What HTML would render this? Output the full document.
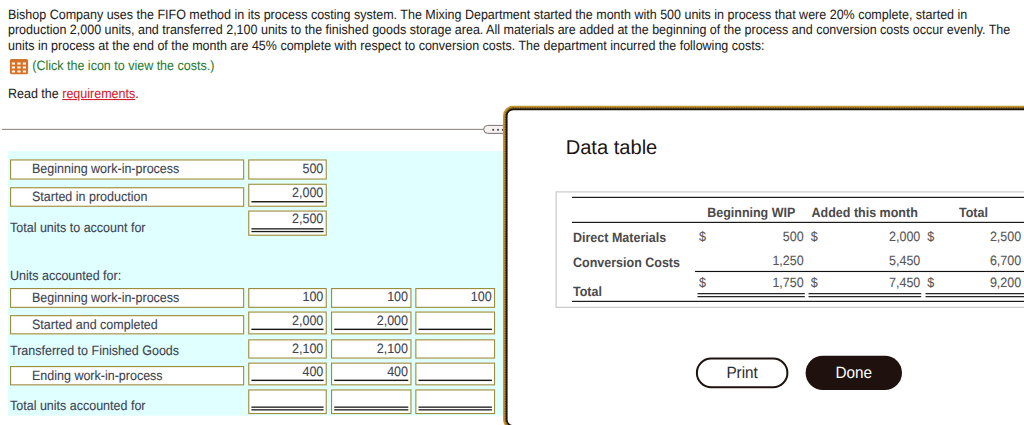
<!DOCTYPE html>
<html>
<head>
<meta charset="utf-8">
<title>Data table</title>
<style>
html,body{margin:0;padding:0;background:#fff;}
body{width:1024px;height:425px;position:relative;overflow:hidden;font-family:"Liberation Sans",sans-serif;font-size:12.5px;color:#1a1a1a;}
.abs{position:absolute;}
#g{position:absolute;left:0;top:0;}
.p,.t,.m,.x{position:absolute;white-space:nowrap;line-height:15px;height:15px;transform-origin:0 11.83px;transform:scaleY(1.08);-webkit-text-stroke:0.1px currentColor;text-rendering:geometricPrecision;}
.p{left:8px;color:#1c1c20;-webkit-text-stroke:0.05px currentColor;}
.t,.x{color:#3d4351;}
.t{left:10px;}
.x{text-align:right;}
.m{color:#555;-webkit-text-stroke:0.1px currentColor;}
.b{font-weight:bold;color:#4a4a4a;-webkit-text-stroke:0;}
.r{text-align:right;}
.btn{position:absolute;font-size:15.3px;text-align:center;white-space:nowrap;transform:scaleY(1.07);text-rendering:geometricPrecision;}
</style>
</head>
<body>
<svg id="g" width="1024" height="425" viewBox="0 0 1024 425">
<rect x="2" y="128.85" width="482" height="1.05" fill="#8c8380"/>
<rect x="483.7" y="125.4" width="28" height="8" rx="4" fill="#f5f1f0" stroke="#7d7371" stroke-width="1"/>
<rect x="492.30" y="128.9" width="1.8" height="1.8" fill="#444"/>
<rect x="497.10" y="128.9" width="1.8" height="1.8" fill="#444"/>
<rect x="501.90" y="128.9" width="1.8" height="1.8" fill="#444"/>
<rect x="8" y="151" width="500" height="264.6" fill="#e0ffff"/>
<g transform="translate(9.9 59.0)"><rect x="0" y="0" width="18.2" height="15.2" rx="1.6" fill="#d4722a"/><g fill="#fff3e0">
<rect x="1.9" y="3.5" width="3.2" height="2.1"/>
<rect x="7.4" y="3.5" width="3.3" height="2.1"/>
<rect x="12.9" y="3.5" width="3.2" height="2.1"/>
<rect x="1.9" y="7.4" width="3.2" height="2.1"/>
<rect x="7.4" y="7.4" width="3.3" height="2.1"/>
<rect x="12.9" y="7.4" width="3.2" height="2.1"/>
<rect x="1.9" y="11.5" width="3.2" height="2.0"/>
<rect x="7.4" y="11.5" width="3.3" height="2.0"/>
<rect x="12.9" y="11.5" width="3.2" height="2.0"/>
</g></g>
<rect x="10.00" y="159.40" width="234.20" height="20.20" fill="#fffdf2"/>
<rect x="11.80" y="161.20" width="230.60" height="16.60" fill="#fff"/>
<rect x="10.55" y="159.95" width="233.10" height="19.10" fill="none" stroke="#9c8c40" stroke-width="1.1"/>
<rect x="10.00" y="187.20" width="234.20" height="19.60" fill="#fffdf2"/>
<rect x="11.80" y="189.00" width="230.60" height="16.00" fill="#fff"/>
<rect x="10.55" y="187.75" width="233.10" height="18.50" fill="none" stroke="#9c8c40" stroke-width="1.1"/>
<rect x="248.20" y="159.40" width="78.60" height="20.20" fill="#fffdf2"/>
<rect x="250.00" y="161.20" width="75.00" height="16.60" fill="#fff"/>
<rect x="248.75" y="159.95" width="77.50" height="19.10" fill="none" stroke="#9c8c40" stroke-width="1.1"/>
<rect x="248.20" y="183.70" width="78.60" height="23.10" fill="#fffdf2"/>
<rect x="250.00" y="185.50" width="75.00" height="19.50" fill="#fff"/>
<rect x="248.75" y="184.25" width="77.50" height="22.00" fill="none" stroke="#9c8c40" stroke-width="1.1"/>
<rect x="251.40" y="201.05" width="72.20" height="1.4" fill="#151515"/>
<rect x="248.20" y="210.50" width="78.60" height="25.30" fill="#fffdf2"/>
<rect x="250.00" y="212.30" width="75.00" height="21.70" fill="#fff"/>
<rect x="248.75" y="211.05" width="77.50" height="24.20" fill="none" stroke="#9c8c40" stroke-width="1.1"/>
<rect x="251.40" y="228.20" width="72.20" height="1.3" fill="#1a1a1a"/>
<rect x="251.40" y="230.90" width="72.20" height="1.3" fill="#1a1a1a"/>
<rect x="10.00" y="288.00" width="234.20" height="19.90" fill="#fffdf2"/>
<rect x="11.80" y="289.80" width="230.60" height="16.30" fill="#fff"/>
<rect x="10.55" y="288.55" width="233.10" height="18.80" fill="none" stroke="#9c8c40" stroke-width="1.1"/>
<rect x="10.00" y="315.10" width="234.20" height="19.30" fill="#fffdf2"/>
<rect x="11.80" y="316.90" width="230.60" height="15.70" fill="#fff"/>
<rect x="10.55" y="315.65" width="233.10" height="18.20" fill="none" stroke="#9c8c40" stroke-width="1.1"/>
<rect x="10.00" y="366.00" width="234.20" height="19.40" fill="#fffdf2"/>
<rect x="11.80" y="367.80" width="230.60" height="15.80" fill="#fff"/>
<rect x="10.55" y="366.55" width="233.10" height="18.30" fill="none" stroke="#9c8c40" stroke-width="1.1"/>
<rect x="248.20" y="288.00" width="78.60" height="19.90" fill="#fffdf2"/>
<rect x="250.00" y="289.80" width="75.00" height="16.30" fill="#fff"/>
<rect x="248.75" y="288.55" width="77.50" height="18.80" fill="none" stroke="#9c8c40" stroke-width="1.1"/>
<rect x="331.00" y="288.00" width="80.50" height="19.90" fill="#fffdf2"/>
<rect x="332.80" y="289.80" width="76.90" height="16.30" fill="#fff"/>
<rect x="331.55" y="288.55" width="79.40" height="18.80" fill="none" stroke="#9c8c40" stroke-width="1.1"/>
<rect x="415.30" y="288.00" width="79.80" height="19.90" fill="#fffdf2"/>
<rect x="417.10" y="289.80" width="76.20" height="16.30" fill="#fff"/>
<rect x="415.85" y="288.55" width="78.70" height="18.80" fill="none" stroke="#9c8c40" stroke-width="1.1"/>
<rect x="248.20" y="311.50" width="78.60" height="22.90" fill="#fffdf2"/>
<rect x="250.00" y="313.30" width="75.00" height="19.30" fill="#fff"/>
<rect x="248.75" y="312.05" width="77.50" height="21.80" fill="none" stroke="#9c8c40" stroke-width="1.1"/>
<rect x="251.40" y="328.65" width="72.20" height="1.4" fill="#151515"/>
<rect x="331.00" y="311.50" width="80.50" height="22.90" fill="#fffdf2"/>
<rect x="332.80" y="313.30" width="76.90" height="19.30" fill="#fff"/>
<rect x="331.55" y="312.05" width="79.40" height="21.80" fill="none" stroke="#9c8c40" stroke-width="1.1"/>
<rect x="334.20" y="328.65" width="74.10" height="1.4" fill="#151515"/>
<rect x="415.30" y="311.50" width="79.80" height="22.90" fill="#fffdf2"/>
<rect x="417.10" y="313.30" width="76.20" height="19.30" fill="#fff"/>
<rect x="415.85" y="312.05" width="78.70" height="21.80" fill="none" stroke="#9c8c40" stroke-width="1.1"/>
<rect x="418.50" y="328.65" width="73.40" height="1.4" fill="#151515"/>
<rect x="248.20" y="339.30" width="78.60" height="19.30" fill="#fffdf2"/>
<rect x="250.00" y="341.10" width="75.00" height="15.70" fill="#fff"/>
<rect x="248.75" y="339.85" width="77.50" height="18.20" fill="none" stroke="#9c8c40" stroke-width="1.1"/>
<rect x="331.00" y="339.30" width="80.50" height="19.30" fill="#fffdf2"/>
<rect x="332.80" y="341.10" width="76.90" height="15.70" fill="#fff"/>
<rect x="331.55" y="339.85" width="79.40" height="18.20" fill="none" stroke="#9c8c40" stroke-width="1.1"/>
<rect x="415.30" y="339.30" width="79.80" height="19.30" fill="#fffdf2"/>
<rect x="417.10" y="341.10" width="76.20" height="15.70" fill="#fff"/>
<rect x="415.85" y="339.85" width="78.70" height="18.20" fill="none" stroke="#9c8c40" stroke-width="1.1"/>
<rect x="248.20" y="362.60" width="78.60" height="22.80" fill="#fffdf2"/>
<rect x="250.00" y="364.40" width="75.00" height="19.20" fill="#fff"/>
<rect x="248.75" y="363.15" width="77.50" height="21.70" fill="none" stroke="#9c8c40" stroke-width="1.1"/>
<rect x="251.40" y="379.65" width="72.20" height="1.4" fill="#151515"/>
<rect x="331.00" y="362.60" width="80.50" height="22.80" fill="#fffdf2"/>
<rect x="332.80" y="364.40" width="76.90" height="19.20" fill="#fff"/>
<rect x="331.55" y="363.15" width="79.40" height="21.70" fill="none" stroke="#9c8c40" stroke-width="1.1"/>
<rect x="334.20" y="379.65" width="74.10" height="1.4" fill="#151515"/>
<rect x="415.30" y="362.60" width="79.80" height="22.80" fill="#fffdf2"/>
<rect x="417.10" y="364.40" width="76.20" height="19.20" fill="#fff"/>
<rect x="415.85" y="363.15" width="78.70" height="21.70" fill="none" stroke="#9c8c40" stroke-width="1.1"/>
<rect x="418.50" y="379.65" width="73.40" height="1.4" fill="#151515"/>
<rect x="248.20" y="389.40" width="78.60" height="24.70" fill="#fffdf2"/>
<rect x="250.00" y="391.20" width="75.00" height="21.10" fill="#fff"/>
<rect x="248.75" y="389.95" width="77.50" height="23.60" fill="none" stroke="#9c8c40" stroke-width="1.1"/>
<rect x="251.40" y="406.50" width="72.20" height="1.3" fill="#1a1a1a"/>
<rect x="251.40" y="409.20" width="72.20" height="1.3" fill="#1a1a1a"/>
<rect x="331.00" y="389.40" width="80.50" height="24.70" fill="#fffdf2"/>
<rect x="332.80" y="391.20" width="76.90" height="21.10" fill="#fff"/>
<rect x="331.55" y="389.95" width="79.40" height="23.60" fill="none" stroke="#9c8c40" stroke-width="1.1"/>
<rect x="334.20" y="406.50" width="74.10" height="1.3" fill="#1a1a1a"/>
<rect x="334.20" y="409.20" width="74.10" height="1.3" fill="#1a1a1a"/>
<rect x="415.30" y="389.40" width="79.80" height="24.70" fill="#fffdf2"/>
<rect x="417.10" y="391.20" width="76.20" height="21.10" fill="#fff"/>
<rect x="415.85" y="389.95" width="78.70" height="23.60" fill="none" stroke="#9c8c40" stroke-width="1.1"/>
<rect x="418.50" y="406.50" width="73.40" height="1.3" fill="#1a1a1a"/>
<rect x="418.50" y="409.20" width="73.40" height="1.3" fill="#1a1a1a"/>
<rect x="503.20" y="105.80" width="560" height="323.7" rx="10" fill="#fff"/>
<rect x="504.45" y="107.05" width="560" height="321.20" rx="8.75" fill="none" stroke="#c4922a" stroke-width="2.80"/>
<rect x="505.30" y="107.90" width="560" height="319.50" rx="7.90" fill="none" stroke="#3a2808" stroke-width="1" stroke-dasharray="0.85 0.85"/>
<rect x="506.65" y="109.25" width="560" height="316.80" rx="6.55" fill="none" stroke="#1e1408" stroke-width="1.90"/>
<rect x="556.1" y="191.9" width="500" height="115.4" fill="none" stroke="#c9c9c9" stroke-width="1.2"/>
<rect x="572.0" y="196.8" width="460.0" height="1.15" fill="#111"/>
<rect x="572.0" y="221.8" width="460.0" height="1.15" fill="#111"/>
<rect x="695.0" y="270.9" width="340.0" height="1.15" fill="#111"/>
<rect x="572.0" y="300.8" width="460.0" height="1.15" fill="#111"/>
<rect x="697.5" y="293.1" width="107.3" height="1.15" fill="#111"/>
<rect x="697.5" y="296.1" width="107.3" height="1.15" fill="#111"/>
<rect x="808.5" y="293.1" width="112.7" height="1.15" fill="#111"/>
<rect x="808.5" y="296.1" width="112.7" height="1.15" fill="#111"/>
<rect x="925.5" y="293.1" width="110.0" height="1.15" fill="#111"/>
<rect x="925.5" y="296.1" width="110.0" height="1.15" fill="#111"/>
<rect x="696.9" y="358.6" width="90.5" height="28.6" rx="14.3" fill="#fff" stroke="#1f130f" stroke-width="2"/>
<rect x="805.6" y="355.7" width="96.4" height="34.4" rx="17.2" fill="#1f120e"/>
</svg>
<div class="p" style="top:8.00px">Bishop Company uses the FIFO method in its process costing system. The Mixing Department started the month with 500 units in process that were 20% complete, started in</div>
<div class="p" style="top:23.00px">production 2,000 units, and transferred 2,100 units to the finished goods storage area. All materials are added at the beginning of the process and conversion costs occur evenly. The</div>
<div class="p" style="top:39.00px">units in process at the end of the month are 45% complete with respect to conversion costs. The department incurred the following costs:</div>
<div class="p" style="top:59.00px;left:32.30px;color:#2a7a2e">(Click the icon to view the costs.)</div>
<div class="p" style="top:87.00px">Read the <span style="color:#d3202e;text-decoration:underline">requirements</span>.</div>
<div class="t" style="top:162.00px;left:32.00px">Beginning work-in-process</div>
<div class="t" style="top:190.00px;left:32.00px">Started in production</div>
<div class="t" style="top:221.00px;left:10.00px">Total units to account for</div>
<div class="x" style="top:162.00px;left:263.30px;width:60px">500</div>
<div class="x" style="top:185.80px;left:263.30px;width:60px">2,000</div>
<div class="x" style="top:212.30px;left:263.30px;width:60px">2,500</div>
<div class="t" style="top:269.00px;left:10.00px">Units accounted for:</div>
<div class="t" style="top:290.50px;left:32.00px">Beginning work-in-process</div>
<div class="t" style="top:318.00px;left:32.00px">Started and completed</div>
<div class="t" style="top:344.00px;left:10.00px">Transferred to Finished Goods</div>
<div class="t" style="top:369.00px;left:32.00px">Ending work-in-process</div>
<div class="t" style="top:398.50px;left:10.00px">Total units accounted for</div>
<div class="x" style="top:290.00px;left:263.30px;width:60px">100</div>
<div class="x" style="top:290.00px;left:348.00px;width:60px">100</div>
<div class="x" style="top:290.00px;left:431.60px;width:60px">100</div>
<div class="x" style="top:313.50px;left:263.30px;width:60px">2,000</div>
<div class="x" style="top:313.50px;left:348.00px;width:60px">2,000</div>
<div class="x" style="top:342.00px;left:263.30px;width:60px">2,100</div>
<div class="x" style="top:342.00px;left:348.00px;width:60px">2,100</div>
<div class="x" style="top:364.60px;left:263.30px;width:60px">400</div>
<div class="x" style="top:364.60px;left:348.00px;width:60px">400</div>
<div class="abs" style="left:565.7px;top:135.6px;font-size:20.1px;line-height:24px;color:#1c1414;text-rendering:geometricPrecision;white-space:nowrap">Data table</div>
<div class="m b" style="left:697.50px;top:205.50px;width:107.50px;text-align:center">Beginning WIP</div>
<div class="m b" style="left:808.20px;top:205.50px;width:113.00px;text-align:center">Added this month</div>
<div class="m b" style="left:925.50px;top:205.50px;width:96.00px;text-align:center">Total</div>
<div class="m b" style="left:573.00px;top:231.00px">Direct Materials</div>
<div class="m b" style="left:573.00px;top:256.00px">Conversion Costs</div>
<div class="m b" style="left:573.00px;top:284.60px">Total</div>
<div class="m " style="left:699.00px;top:230.00px">$</div>
<div class="m r" style="left:700.00px;top:230.00px;width:103.70px;text-align:right">500</div>
<div class="m " style="left:810.80px;top:230.00px">$</div>
<div class="m r" style="left:812.00px;top:230.00px;width:108.30px;text-align:right">2,000</div>
<div class="m " style="left:927.20px;top:230.00px">$</div>
<div class="m r" style="left:930.00px;top:230.00px;width:91.20px;text-align:right">2,500</div>
<div class="m r" style="left:700.00px;top:254.00px;width:103.70px;text-align:right">1,250</div>
<div class="m r" style="left:812.00px;top:254.00px;width:108.30px;text-align:right">5,450</div>
<div class="m r" style="left:930.00px;top:254.00px;width:91.20px;text-align:right">6,700</div>
<div class="m " style="left:699.00px;top:276.00px">$</div>
<div class="m r" style="left:700.00px;top:276.00px;width:103.70px;text-align:right">1,750</div>
<div class="m " style="left:810.80px;top:276.00px">$</div>
<div class="m r" style="left:812.00px;top:276.00px;width:108.30px;text-align:right">7,450</div>
<div class="m " style="left:927.20px;top:276.00px">$</div>
<div class="m r" style="left:930.00px;top:276.00px;width:91.20px;text-align:right">9,200</div>
<div class="btn" style="left:696px;top:358.6px;width:92.3px;height:30.6px;line-height:30.6px;transform-origin:50% 20.6px;color:#2a2a33">Print</div>
<div class="btn" style="left:805.6px;top:356.7px;width:96.4px;height:34.4px;line-height:34px;transform-origin:50% 22.3px;color:#fff">Done</div>
</body>
</html>
